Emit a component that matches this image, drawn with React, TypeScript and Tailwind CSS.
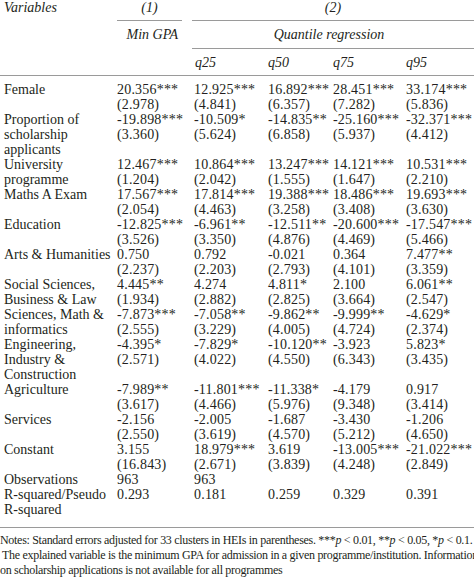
type Row = { label: string[]; vals: string[]; ses?: string[] };

const rows: Row[] = [
  { label: ['Female'], vals: ['20.356***', '12.925***', '16.892***', '28.451***', '33.174***'], ses: ['(2.978)', '(4.841)', '(6.357)', '(7.282)', '(5.836)'] },
  { label: ['Proportion of', 'scholarship', 'applicants'], vals: ['-19.898***', '-10.509*', '-14.835**', '-25.160***', '-32.371***'], ses: ['(3.360)', '(5.624)', '(6.858)', '(5.937)', '(4.412)'] },
  { label: ['University', 'programme'], vals: ['12.467***', '10.864***', '13.247***', '14.121***', '10.531***'], ses: ['(1.204)', '(2.042)', '(1.555)', '(1.647)', '(2.210)'] },
  { label: ['Maths A Exam'], vals: ['17.567***', '17.814***', '19.388***', '18.486***', '19.693***'], ses: ['(2.054)', '(4.463)', '(3.258)', '(3.408)', '(3.630)'] },
  { label: ['Education'], vals: ['-12.825***', '-6.961**', '-12.511**', '-20.600***', '-17.547***'], ses: ['(3.526)', '(3.350)', '(4.876)', '(4.469)', '(5.466)'] },
  { label: ['Arts & Humanities'], vals: ['0.750', '0.792', '-0.021', '0.364', '7.477**'], ses: ['(2.237)', '(2.203)', '(2.793)', '(4.101)', '(3.359)'] },
  { label: ['Social Sciences,', 'Business & Law'], vals: ['4.445**', '4.274', '4.811*', '2.100', '6.061**'], ses: ['(1.934)', '(2.882)', '(2.825)', '(3.664)', '(2.547)'] },
  { label: ['Sciences, Math &', 'informatics'], vals: ['-7.873***', '-7.058**', '-9.862**', '-9.999**', '-4.629*'], ses: ['(2.555)', '(3.229)', '(4.005)', '(4.724)', '(2.374)'] },
  { label: ['Engineering,', 'Industry &', 'Construction'], vals: ['-4.395*', '-7.829*', '-10.120**', '-3.923', '5.823*'], ses: ['(2.571)', '(4.022)', '(4.550)', '(6.343)', '(3.435)'] },
  { label: ['Agriculture'], vals: ['-7.989**', '-11.801***', '-11.338*', '-4.179', '0.917'], ses: ['(3.617)', '(4.466)', '(5.976)', '(9.348)', '(3.414)'] },
  { label: ['Services'], vals: ['-2.156', '-2.005', '-1.687', '-3.430', '-1.206'], ses: ['(2.550)', '(3.619)', '(4.570)', '(5.212)', '(4.650)'] },
  { label: ['Constant'], vals: ['3.155', '18.979***', '3.619', '-13.005***', '-21.022***'], ses: ['(16.843)', '(2.671)', '(3.839)', '(4.248)', '(2.849)'] },
  { label: ['Observations'], vals: ['963', '963', '', '', ''] },
  { label: ['R-squared/Pseudo', 'R-squared'], vals: ['0.293', '0.181', '0.259', '0.329', '0.391'] },
];

const cols = 'grid grid-cols-[117px_76px_74px_65px_73px_69px]';

export default function App() {
  return (
    <div className="w-[474px] h-[577px] overflow-hidden bg-white text-[#231f20] font-['Liberation_Serif',serif] text-[14px] leading-[15px]">
      {/* header */}
      <div className="grid grid-cols-[117px_75px_282px]">
        <div className="pl-[4px] italic">Variables</div>
        <div className="mr-[10px] border-b border-[#9a9a9a] pb-[5px] text-center italic">(1)</div>
        <div className="border-b border-[#9a9a9a] pb-[5px] text-center italic">(2)</div>
        <div />
        <div className="mr-[10px] pt-[6px] pb-[7px] pr-[4px] text-right italic">Min GPA</div>
        <div className="border-b border-[#9a9a9a] pt-[6px] pb-[6px] pr-[8px] text-center italic">Quantile regression</div>
      </div>
      <div className={`${cols} border-b border-[#9a9a9a] pt-[6px] pb-[5px] italic`}>
        <div />
        <div />
        <div className="pl-[2px]">q25</div>
        <div className="pl-[1px]">q50</div>
        <div className="pl-[1px]">q75</div>
        <div className="pl-[1px]">q95</div>
      </div>

      {/* body */}
      <div className="border-b border-[#9a9a9a] pt-[6px] pb-[10px]">
        {rows.map((r) => (
          <div key={r.label.join(' ')} className={cols}>
            <div className="pl-[4px] whitespace-nowrap">
              {r.label.map((l) => (
                <div key={l}>{l}</div>
              ))}
            </div>
            {r.vals.map((v, i) => (
              <div key={i} className={`whitespace-nowrap tracking-[0.2px] ${i === 0 ? '' : 'pl-[1px]'}`}>
                <div>{v || '\u00a0'}</div>
                {r.ses && <div>{r.ses[i]}</div>}
              </div>
            ))}
          </div>
        ))}
      </div>

      {/* notes */}
      <div className="pt-[5px] text-[12px] tracking-[-0.3px] leading-[15px] whitespace-nowrap">
        <div>Notes: Standard errors adjusted for 33 clusters in HEIs in parentheses. ***<i>p</i> &lt; 0.01, **<i>p</i> &lt; 0.05, *<i>p</i> &lt; 0.1.</div>
        <div className="pl-[2px]">The explained variable is the minimum GPA for admission in a given programme/institution. Information</div>
        <div>on scholarship applications is not available for all programmes</div>
      </div>
    </div>
  );
}
